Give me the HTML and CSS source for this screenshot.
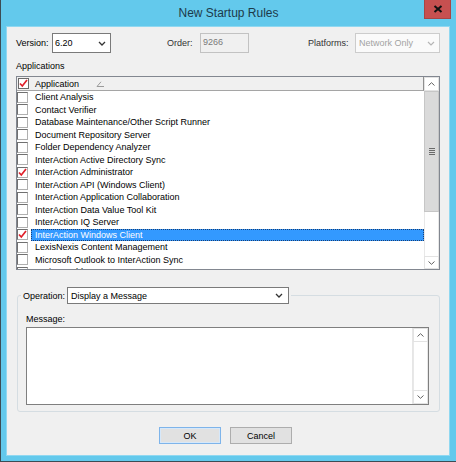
FILE: index.html
```html
<!DOCTYPE html>
<html lang="en">
<head>
    <meta charset="UTF-8">
    <meta name="viewport" content="width=device-width, initial-scale=1.0">
    <title>New Startup Rules</title>
    <link rel="stylesheet" href="styles.css">
</head>
<body>

<div class="window">
    <!-- Barra de titulo -->
    <div class="titlebar">
        <span></span>
        <span class="title">New Startup Rules</span>
        <div class="close">
            <svg width="10" height="8" viewBox="0 0 10 8"><path d="M1.5 1 L8.5 7 M8.5 1 L1.5 7" stroke="#111" stroke-width="2"/></svg>
        </div>
    </div>

    <div class="content">
        <div class="toprow">
            <div class="field f-version">
                <span class="lbl lbl-version">Version:</span>
                <div class="combo combo-version">
                    <span>6.20</span>
                    <svg class="chev" width="8" height="5" viewBox="0 0 8 5"><path d="M1 1 L4 4 L7 1" stroke="#333" stroke-width="1.3" fill="none"/></svg>
                </div>
            </div>
            <div class="field f-order">
                <span class="lbl lbl-order">Order:</span>
                <div class="textbox disabled">9266</div>
            </div>
            <div class="field f-platform">
                <span class="lbl lbl-platform">Platforms:</span>
                <div class="combo combo-platform disabled">
                    <span>Network Only</span>
                    <svg class="chev" width="8" height="5" viewBox="0 0 8 5"><path d="M1 1 L4 4 L7 1" stroke="#b5b5b5" stroke-width="1.2" fill="none"/></svg>
                </div>
            </div>
        </div>

        <div class="apps-label">Applications</div>

        <div class="list">
            <div class="list-body">
                <div class="list-header">
                    <span class="chk on"><svg width="9" height="9" viewBox="0 0 9 9"><path d="M1 4.5 L3.3 7 L8 1" stroke="#e0202a" stroke-width="1.7" fill="none"/></svg></span>
                    <span class="col-name">Application</span>
                    <svg class="sort" width="9" height="6" viewBox="0 0 9 6"><path d="M1 5.5 L5 0.8 M1 5.5 H8" stroke="#9a9a9a" stroke-width="1" fill="none"/></svg>
                </div>
                <div id="rows"></div>
            </div>
            <div class="vscroll">
                <div class="sb-btn"><svg width="7" height="4" viewBox="0 0 7 4"><path d="M0.5 3.5 L3.5 0.7 L6.5 3.5" stroke="#606060" fill="none"/></svg></div>
                <div class="sb-thumb">
                    <svg width="6" height="7" viewBox="0 0 6 7"><path d="M0 0.5 H6 M0 2.5 H6 M0 4.5 H6 M0 6.5 H6" stroke="#6a6a6a" stroke-width="1"/></svg>
                </div>
                <div class="sb-track"></div>
                <div class="sb-btn sb-down"><svg width="7" height="4" viewBox="0 0 7 4"><path d="M0.5 0.5 L3.5 3.3 L6.5 0.5" stroke="#606060" fill="none"/></svg></div>
            </div>
        </div>

        <fieldset class="group">
            <legend>
                <span class="lbl lbl-operation">Operation:</span>
                <div class="combo combo-operation">
                    <span>Display a Message</span>
                    <svg class="chev" width="8" height="5" viewBox="0 0 8 5"><path d="M1 1 L4 4 L7 1" stroke="#333" stroke-width="1.3" fill="none"/></svg>
                </div>
            </legend>
            <div class="msg-label">Message:</div>
            <div class="memo">
                <div class="memo-text"></div>
                <div class="memo-scroll">
                    <div class="sb-btn"><svg width="7" height="4" viewBox="0 0 7 4"><path d="M0.5 3.5 L3.5 0.7 L6.5 3.5" stroke="#606060" fill="none"/></svg></div>
                    <div class="sb-track"></div>
                    <div class="sb-btn"><svg width="7" height="4" viewBox="0 0 7 4"><path d="M0.5 0.5 L3.5 3.3 L6.5 0.5" stroke="#606060" fill="none"/></svg></div>
                </div>
            </div>
        </fieldset>

        <div class="buttons">
            <button class="btn btn-default">OK</button>
            <button class="btn">Cancel</button>
        </div>
    </div>
</div>

<script>
    const apps = [
        ["Client Analysis", false],
        ["Contact Verifier", false],
        ["Database Maintenance/Other Script Runner", false],
        ["Document Repository Server", false],
        ["Folder Dependency Analyzer", false],
        ["InterAction Active Directory Sync", false],
        ["InterAction Administrator", true],
        ["InterAction API (Windows Client)", false],
        ["InterAction Application Collaboration", false],
        ["InterAction Data Value Tool Kit", false],
        ["InterAction IQ Server", false],
        ["InterAction Windows Client", true, true],
        ["LexisNexis Content Management", false],
        ["Microsoft Outlook to InterAction Sync", false],
        ["Project Folder Converter", false]
    ];

    const check = '<svg width="9" height="9" viewBox="0 0 9 9"><path d="M1 4.5 L3.3 7 L8 1" stroke="#e0202a" stroke-width="1.7" fill="none"/></svg>';

    let html = '';
    apps.forEach(([name, checked, selected]) => {
        html += `<div class="row">
            <span class="chk">${checked ? check : ''}</span>
            <span class="row-name${selected ? ' selected' : ''}">${name}</span>
        </div>`;
    });
    document.getElementById('rows').innerHTML = html;
</script>

</body>
</html>
```

FILE: styles.css
```css
body {
    margin: 0;
    padding: 0;
    font-family: "Liberation Sans", Arial, sans-serif;
    font-size: 9px;
    color: #000;
}

.window {
    width: 456px;
    height: 462px;
    box-sizing: border-box;
    background-color: #63c9ec;
    border-left: 1px solid #3c4c54;
    border-bottom: 1px solid #3c4c54;
}

.titlebar {
    height: 27px;
    display: grid;
    grid-template-columns: 1fr auto 1fr;
    align-items: start;
}

.title {
    font-size: 12px;
    line-height: 26px;
    color: #1d3a4a;
}

.close {
    justify-self: end;
    margin-right: 5px;
    width: 27px;
    height: 19px;
    background-color: #c75050;
    border: 1px solid #a84545;
    border-top: none;
    box-sizing: border-box;
    display: flex;
    align-items: center;
    justify-content: center;
}

.content {
    margin: 0 7px 0 6px;
    height: 428px;
    box-sizing: border-box;
    background-color: #f0f0f0;
    box-shadow: 0 0 0 1px #90d8f1;
    padding: 6px 9px 0 9px;
}

/* Fila superior */
.toprow {
    display: flex;
    align-items: center;
    height: 20px;
}

.field {
    display: flex;
    align-items: center;
}

.f-version { width: 151px; }
.f-order { width: 141px; }

.lbl-version { width: 36px; }
.lbl-order { width: 33px; color: #333; }
.lbl-platform { width: 47px; color: #333; }

.combo {
    height: 20px;
    box-sizing: border-box;
    border: 1px solid #7a7a7a;
    background-color: #fff;
    display: flex;
    align-items: center;
    justify-content: space-between;
    padding: 0 4px 0 2px;
}

.combo-version { width: 59px; }

.combo-platform {
    width: 85px;
    border-color: #cccccc;
    background-color: #fafafa;
    color: #a3a3a3;
    padding-left: 3px;
}

.textbox {
    width: 49px;
    height: 20px;
    box-sizing: border-box;
    border: 1px solid #c2c2c2;
    background-color: #f0f0f0;
    color: #7a7a7a;
    line-height: 16px;
    padding-left: 2px;
}

.apps-label {
    margin-top: 7px;
    line-height: 12px;
}

/* Lista de aplicaciones */
.list {
    margin-top: 4px;
    width: 424px;
    height: 194px;
    box-sizing: border-box;
    border: 1px solid #828790;
    background-color: #fff;
    display: flex;
}

.list-body {
    flex: 1;
    overflow: hidden;
}

.list-header {
    height: 14px;
    box-sizing: border-box;
    background-color: #f0f0f0;
    border-bottom: 1px solid #a5a5a5;
    border-right: 1px solid #8f8f8f;
    display: flex;
    align-items: center;
    padding-left: 1px;
}

.col-name {
    margin-left: 6px;
}

.sort {
    margin-left: 17px;
}

.chk {
    width: 11px;
    height: 11px;
    box-sizing: border-box;
    border: 1px solid #6a6a6a;
    background-color: #fff;
    display: flex;
    align-items: center;
    justify-content: center;
    flex-shrink: 0;
}

.row {
    height: 12.5px;
    display: flex;
    align-items: center;
}

.row .chk {
    border-color: #707070 #b0b0b0 #b0b0b0 #707070;
}

.row-name {
    margin-left: 7px;
    line-height: 12px;
    flex: 1;
    height: 12px;
    padding-left: 0;
}

.row-name.selected {
    margin-left: 3px;
    padding-left: 4px;
    background-color: #3399ff;
    color: #fff;
    outline: 1px dotted #1b3f73;
    outline-offset: -1px;
}

/* Barras de desplazamiento */
.vscroll {
    width: 15px;
    display: flex;
    flex-direction: column;
    background-color: #fff;
}

.sb-btn {
    height: 14px;
    box-sizing: border-box;
    border: 1px solid #e3e3e3;
    background-color: #fff;
    display: flex;
    align-items: center;
    justify-content: center;
}

.sb-down {
    height: 13px;
}

.sb-thumb {
    height: 121px;
    box-sizing: border-box;
    background-color: #dadada;
    border: 1px solid #c6c6c6;
    display: flex;
    align-items: center;
    justify-content: center;
}

.sb-track {
    flex: 1;
    background-color: #fff;
    border-left: 1px solid #e8e8e8;
    border-right: 1px solid #e8e8e8;
}

/* Grupo de operacion */
.group {
    margin: 17px 0 0 1px;
    width: 423px;
    box-sizing: border-box;
    border: 1px solid #d5dde2;
    border-radius: 3px;
    padding: 0 8px 6px 3px;
    min-width: 0;
}

.group legend {
    padding: 0 2px;
    display: flex;
    align-items: center;
}

.lbl-operation {
    width: 44px;
}

.combo-operation {
    width: 222px;
    height: 17px;
    padding-left: 3px;
    padding-right: 5px;
}

.msg-label {
    margin: 9px 0 0 5px;
    line-height: 12px;
}

.memo {
    margin: 2px 0 0 5px;
    width: 403px;
    height: 78px;
    box-sizing: border-box;
    border: 1px solid #7f7f7f;
    background-color: #fff;
    display: flex;
}

.memo-text {
    flex: 1;
}

.memo-scroll {
    width: 15px;
    display: flex;
    flex-direction: column;
    border-left: 1px solid #e6e6e6;
}

.memo-scroll .sb-btn {
    border: 1px solid #e3e3e3;
}

/* Botones */
.buttons {
    margin-top: 15px;
    padding-left: 143px;
    display: flex;
    gap: 9px;
}

.btn {
    width: 62px;
    height: 17px;
    padding: 0;
    font-family: "Liberation Sans", Arial, sans-serif;
    font-size: 9px;
    color: #000;
    background-color: #e1e1e1;
    border: 1px solid #adadad;
    border-radius: 0;
}

.btn-default {
    border-color: #7eb4ea;
    box-shadow: inset 0 0 0 1px #d6e8fa;
}
```
